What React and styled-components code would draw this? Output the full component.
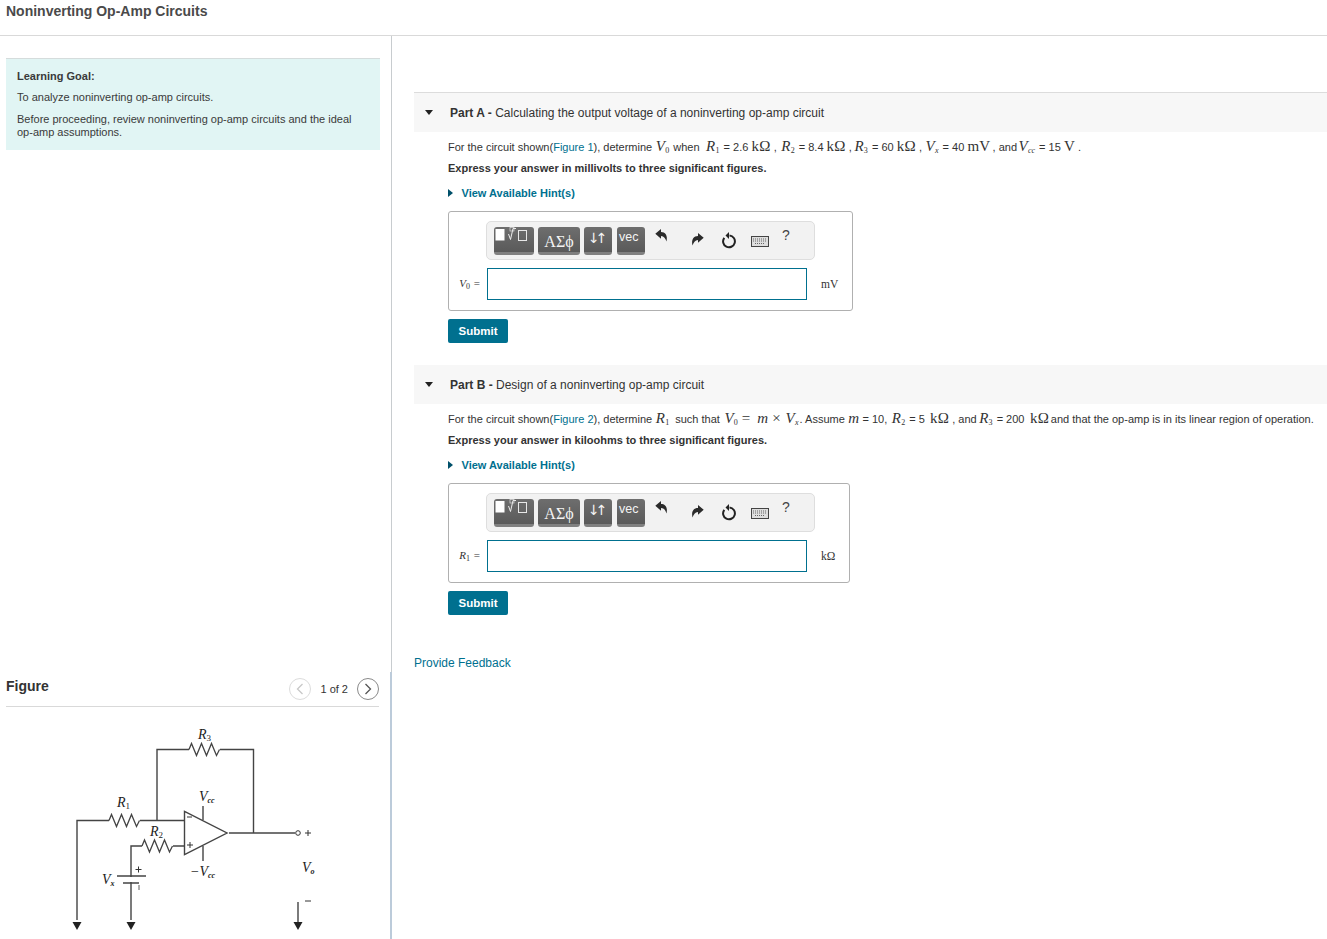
import React from "react";
import styled, { createGlobalStyle } from "styled-components";

const Global = createGlobalStyle`
  html, body { margin: 0; padding: 0; background: #fff; overflow: hidden; }
  body { font-family: "Liberation Sans", Arial, sans-serif; color: #333; width: 1327px; height: 939px; }
`;

const Page = styled.div`width: 1327px; height: 939px; overflow: hidden; display: flex; flex-direction: column;`;
const Header = styled.header`flex: none; height: 32px; border-bottom: 1px solid #d9d9d9; padding: 3px 6px 0;`;
const Title = styled.h1`margin: 0; font-size: 14px; line-height: 16px; font-weight: 700; color: #4a4a4a;`;
const Columns = styled.div`flex: 1; display: flex; min-height: 0;`;
const Aside = styled.aside`width: 385px; padding-left: 6px; border-right: 1px solid #c8cccf; display: flex; flex-direction: column; padding-top: 22px; flex: none;`;
const Goal = styled.section`flex: none; width: 374px; height: 92px; box-sizing: border-box; background: #e1f5f4; border-top: 1px solid #d5dcdc; padding: 11px 11px 0; font-size: 11px; color: #3a3a3a;`;
const GoalTitle = styled.div`font-weight: 700; line-height: 12px; margin-bottom: 8.5px;`;
const GoalText = styled.p`margin: 0 0 9px; line-height: 13px;`;
const FigureSection = styled.section`flex: 1; margin-top: 522px; margin-right: -1px; border-right: 2px solid #bccbda; min-height: 0;`;
const FigureHead = styled.div`width: 373px; height: 28px; border-bottom: 1px solid #d9d9d9; display: flex; align-items: flex-start; padding-top: 6px;`;
const FigureTitle = styled.div`font-size: 14px; font-weight: 700; line-height: 16px; color: #333; flex: 1;`;
const Pager = styled.div`display: flex; align-items: center; gap: 9px; font-size: 11px; color: #333;`;
const PageBtn = styled.span`width: 22px; height: 22px; box-sizing: border-box; border-radius: 50%; border: 1px solid ${p => p.$off ? "#dcdcdc" : "#8a8a8a"}; display: flex; align-items: center; justify-content: center;`;
const Circuit = styled.svg`display: block; margin: 13px 0 0 54px; flex: none;`;

const Main = styled.main`flex: 1; padding: 56px 0 0 22px; min-width: 0;`;
const PartHead = styled.div`height: ${p => p.$plain ? 39 : 40}px; box-sizing: border-box; background: #f7f7f7; border-top: ${p => p.$plain ? "none" : "1px solid #dcdcdc"}; display: flex; align-items: center; padding-left: 11px; font-size: 12px; color: #333;`;
const Caret = styled.span`width: 0; height: 0; border-left: 4.5px solid transparent; border-right: 4.5px solid transparent; border-top: 5px solid #222; margin-right: 17px;`;
const PartBody = styled.div`padding-left: 34px;`;
const Line = styled.p`margin: 0; font-size: 11px; line-height: 14px; color: #333; white-space: nowrap; padding-top: 8px;`;
const Instruction = styled.p`margin: 0; font-size: 11px; line-height: 14px; font-weight: 700; color: #333; padding-top: 7px;`;
const Link = styled.span`color: #00708f;`;
const Hint = styled.div`display: flex; align-items: center; font-size: 11px; line-height: 14px; font-weight: 700; color: #00708f; padding-top: 11px;`;
const HintCaret = styled.span`width: 0; height: 0; border-top: 4.5px solid transparent; border-bottom: 4.5px solid transparent; border-left: 5px solid #00506a; margin-right: 8.5px;`;
const Math = styled.span`font-family: "Liberation Serif", serif; font-size: 15px; line-height: 0; letter-spacing: 0.3px; margin-left: ${p => p.$l ?? 0}px; margin-right: ${p => p.$r ?? 0}px;`;
const Var = styled.i`font-family: "Liberation Serif", serif; font-size: 15px; line-height: 0; font-style: italic; letter-spacing: 0.2px; margin-left: ${p => p.$l ?? 0.5}px;`;
const Sub = styled.sub`font-size: 8px; line-height: 0; font-family: "Liberation Serif", serif; font-style: ${p => p.$it ? "italic" : "normal"}; vertical-align: -2px; margin-right: ${p => p.$r ?? 1}px;`;

const AnswerBox = styled.div`margin-top: 11px; width: ${p => p.$w}px; height: 100px; box-sizing: border-box; border: 1px solid #b0b0b0; border-radius: 3px; padding: 9px 0 0 37px;`;
const Toolbar = styled.div`position: relative; width: 329px; height: 39px; box-sizing: border-box; background: #f2f2f2; border: 1px solid #dedede; border-radius: 5px; display: flex; align-items: flex-start; padding: 5px 0 0 7px;`;
const ToolBtn = styled.span`width: ${p => p.$w}px; height: 28px; margin-right: ${p => p.$gap}px; box-sizing: border-box; border-radius: 3px; background: linear-gradient(#6e6e6e, #5a5a5a); border-bottom: 3px solid #808080; color: #f4f4f4; display: flex; align-items: center; justify-content: center; flex: none;`;
const SymbolBtn = styled(ToolBtn)`font-family: "Liberation Serif", serif; font-size: 16px; line-height: 18px; padding-top: 4px;`;
const SwapBtn = styled(ToolBtn)`font-family: "DejaVu Sans", sans-serif; font-size: 14px; letter-spacing: -4px; line-height: 22px; align-items: flex-start; justify-content: flex-start; padding-left: 4px;`;
const VecBtn = styled(ToolBtn)`font-family: "Liberation Sans", sans-serif; font-size: 12.5px; line-height: 20px; align-items: flex-start; justify-content: flex-start; padding-left: 2px;`;
const ToolIcon = styled.span`position: absolute; left: ${p => p.$x}px; top: ${p => p.$y}px; display: block; line-height: 0;`;
const Question = styled.span`position: absolute; left: 295px; top: 5px; font-size: 14px; line-height: 16px; color: #444;`;
const InputRow = styled.div`display: flex; align-items: center; margin-top: 8px; margin-left: -37px;`;
const Label = styled.span`width: 38px; box-sizing: border-box; text-align: right; padding-right: 7px; font-family: "Liberation Serif", serif; font-size: 11px; line-height: 14px; margin-top: -2px; color: #333; white-space: nowrap;`;
const FieldBox = styled.div`width: 320px; height: 32px; box-sizing: border-box; border: 1px solid #00708f; background: #fff; flex: none;`;
const Unit = styled.span`margin-left: 14px; font-family: "Liberation Serif", serif; font-size: 11.5px; color: #333;`;
const Submit = styled.button`display: block; margin-top: 8px; width: 60px; height: 24px; border: none; border-radius: 2px; background: #00708f; color: #fff; padding: 0; font: 700 11.5px "Liberation Sans", sans-serif;`;
const PartGap = styled.div`height: 22px;`;
const Feedback = styled.div`margin-top: 40px; font-size: 12px; line-height: 16px; color: #00708f;`;

const Arrow = ({ flip }) => (
  <svg width="13" height="13" viewBox="0 0 13 13" style={flip ? { transform: "scaleX(-1)" } : undefined}>
    <path d="M0.300 4.700 L6 0 V3 C10 3 13 6 11.500 12.500 C10.500 9.300 9 7 6 6.900 V9.800 Z" fill="#2b2b2b" />
  </svg>
);

const TemplateIcon = () => (
  <svg width="40" height="25" viewBox="0 0 40 25">
    <rect x="1.500" y="2" width="9" height="11.500" fill="#fff" />
    <path d="M14.500 7 l2 5.500 l2.500 -11 h3" stroke="#eee" fill="none" strokeWidth="1" />
    <rect x="16" y="0.500" width="4" height="3.500" stroke="#ddd" fill="none" strokeWidth="0.700" />
    <rect x="24.500" y="3.500" width="8" height="10" stroke="#e8e8e8" fill="none" strokeWidth="1" />
    <path d="M3 26h2M8 26h2M29 26h2M36 26h2" stroke="#333" strokeWidth="1" />
  </svg>
);

const Tools = () => (
  <Toolbar>
    <ToolBtn $w={40} $gap={4}><TemplateIcon /></ToolBtn>
    <SymbolBtn $w={42} $gap={4}>ΑΣϕ</SymbolBtn>
    <SwapBtn $w={28} $gap={5}>↓↑</SwapBtn>
    <VecBtn $w={28} $gap={0}>vec</VecBtn>
    <ToolIcon $x={168} $y={7}><Arrow /></ToolIcon>
    <ToolIcon $x={204} $y={11}><Arrow flip /></ToolIcon>
    <ToolIcon $x={234} $y={9}>
      <svg width="16" height="18" viewBox="0 0 16 18">
        <path d="M8.500 4.500 A5.900 5.900 0 1 1 3.300 6.800" fill="none" stroke="#222" strokeWidth="2" />
        <path d="M8 1 L8 8 L4.500 4.500 Z" fill="#222" />
      </svg>
    </ToolIcon>
    <ToolIcon $x={264} $y={14}>
      <svg width="18" height="11" viewBox="0 0 18 11">
        <rect x="0.500" y="0.500" width="17" height="10" fill="#dedede" stroke="#444" />
        <path d="M2 3h14M2 5h14M4 7.500h10" stroke="#666" strokeWidth="1" strokeDasharray="1 1" />
      </svg>
    </ToolIcon>
    <Question>?</Question>
  </Toolbar>
);

const Zig = ({ x, y }) => (
  <path d={`M${x} ${y} l2.500 -6 l5 12 l5 -12 l5 12 l5 -12 l5 12 l3 -6`} fill="none" stroke="#444" strokeWidth="1.300" />
);
const ITxt = styled.text`font-family: "Liberation Serif", serif; font-style: italic; font-size: 14px; fill: #222;`;

const CircuitFigure = () => (
  <Circuit width="270" height="219" viewBox="60 720 270 219">
    <g fill="none" stroke="#444" strokeWidth="1.400">
      <path d="M77 920 V820.500 H109 M140 820.500 H185" />
      <path d="M157 820.500 V749.500 H189 M220 749.500 H253.500 V833" />
      <path d="M131 920 V882 M131 877 V846 H142 M173 846 H185" />
      <path d="M229 833 H295" />
      <path d="M117 876 H146 M123 883 H139" />
      <path d="M203 806 V820 M203 846 V861" />
      <path d="M298 902 V922" />
      <path d="M184.500 811.500 V854.500 L227 833 Z" fill="#fff" />
    </g>
    <circle cx="298" cy="833" r="2.300" fill="#fff" stroke="#333" />
    <Zig x={109} y={820.5} />
    <Zig x={189} y={749.5} />
    <Zig x={142} y={846} />
    <path d="M72.500 922 H81.500 L77 930 Z M126.500 922 H135.500 L131 930 Z M293.500 922 H302.500 L298 930 Z" fill="#222" />
    <path d="M187 817 h5 M187 845 h6 M190 842 v6 M135.500 869.500 h6 M138.500 866.500 v6 M305 833 h6 M308 830 v6 M305 901 h6" stroke="#333" strokeWidth="1" />
    <path d="M139 885 v5" stroke="#333" strokeWidth="0.800" />
    <ITxt x="198" y="739">R<tspan fontSize="9" dy="2" fontStyle="normal">3</tspan></ITxt>
    <ITxt x="117" y="807">R<tspan fontSize="9" dy="2" fontStyle="normal">1</tspan></ITxt>
    <ITxt x="150" y="836">R<tspan fontSize="9" dy="2" fontStyle="normal">2</tspan></ITxt>
    <ITxt x="199" y="801">V<tspan fontSize="8" dy="2" fontWeight="700">cc</tspan></ITxt>
    <ITxt x="190" y="876">−V<tspan fontSize="8" dy="2" fontWeight="700">cc</tspan></ITxt>
    <ITxt x="102" y="884">V<tspan fontSize="8" dy="2" fontWeight="700">x</tspan></ITxt>
    <ITxt x="302" y="872">V<tspan fontSize="8" dy="2" fontWeight="700">o</tspan></ITxt>
  </Circuit>
);

export default function App() {
  return (
    <Page>
      <Global />
      <Header><Title>Noninverting Op-Amp Circuits</Title></Header>
      <Columns>
        <Aside>
          <Goal>
            <GoalTitle>Learning Goal:</GoalTitle>
            <GoalText>To analyze noninverting op-amp circuits.</GoalText>
            <GoalText>Before proceeding, review noninverting op-amp circuits and the ideal<br />op-amp assumptions.</GoalText>
          </Goal>
          <FigureSection>
            <FigureHead>
              <FigureTitle>Figure</FigureTitle>
              <Pager>
                <PageBtn $off>
                  <svg width="8" height="12" viewBox="0 0 8 12"><path d="M6.500 1 L1.500 6 L6.500 11" fill="none" stroke="#c8c8c8" strokeWidth="1.300" /></svg>
                </PageBtn>
                <span>1 of 2</span>
                <PageBtn>
                  <svg width="8" height="12" viewBox="0 0 8 12"><path d="M1.500 1 L6.500 6 L1.500 11" fill="none" stroke="#555" strokeWidth="1.300" /></svg>
                </PageBtn>
              </Pager>
            </FigureHead>
            <CircuitFigure />
          </FigureSection>
        </Aside>
        <Main>
          <PartHead><Caret /><b>Part A -&nbsp;</b>Calculating the output voltage of a noninverting op-amp circuit</PartHead>
          <PartBody>
            <Line>
              For the circuit shown(<Link>Figure 1</Link>), determine <Var>V</Var><Sub>0</Sub> when &nbsp;<Var>R</Var><Sub>1</Sub> = 2.6 <Math>kΩ</Math> , <Var $l={1.5}>R</Var><Sub>2</Sub> = 8.4 <Math>kΩ</Math> , <Var $l={-0.5}>R</Var><Sub>3</Sub> = 60 <Math>kΩ</Math> , <Var>V</Var><Sub $it>x</Sub> = 40 <Math $r={-1}>mV</Math> , <span>and</span> <Var $l={-1.5}>V</Var><Sub $it>cc</Sub> = 15 <Math>V</Math> .
            </Line>
            <Instruction>Express your answer in millivolts to three significant figures.</Instruction>
            <Hint><HintCaret />View Available Hint(s)</Hint>
            <AnswerBox $w={405}>
              <Tools />
              <InputRow>
                <Label><i>V</i><Sub>0</Sub> =</Label>
                <FieldBox />
                <Unit>mV</Unit>
              </InputRow>
            </AnswerBox>
            <Submit>Submit</Submit>
          </PartBody>
          <PartGap />
          <PartHead $plain><Caret /><b>Part B -&nbsp;</b>Design of a noninverting op-amp circuit</PartHead>
          <PartBody>
            <Line>
              For the circuit shown(<Link>Figure 2</Link>), determine <Var>R</Var><Sub $r={3}>1</Sub> such that <Var $l={1.5}>V</Var><Sub>0</Sub> <Math>=</Math> <Var $l={3.5}>m</Var> <Math $l={1}>×</Math> <Var $l={1.5}>V</Var><Sub $it>x</Sub>. Assume <Var>m</Var> = 10, <Var $l={1.5}>R</Var><Sub>2</Sub> = 5 <Math $l={2}>kΩ</Math> , and <Var $l={-0.5}>R</Var><Sub>3</Sub> = 200 <Math $l={2.5} $r={-1.5}>kΩ</Math> and that the op-amp is in its linear region of operation.
            </Line>
            <Instruction>Express your answer in kiloohms to three significant figures.</Instruction>
            <Hint><HintCaret />View Available Hint(s)</Hint>
            <AnswerBox $w={402}>
              <Tools />
              <InputRow>
                <Label><i>R</i><Sub>1</Sub> =</Label>
                <FieldBox />
                <Unit>kΩ</Unit>
              </InputRow>
            </AnswerBox>
            <Submit>Submit</Submit>
          </PartBody>
          <Feedback>Provide Feedback</Feedback>
        </Main>
      </Columns>
    </Page>
  );
}
